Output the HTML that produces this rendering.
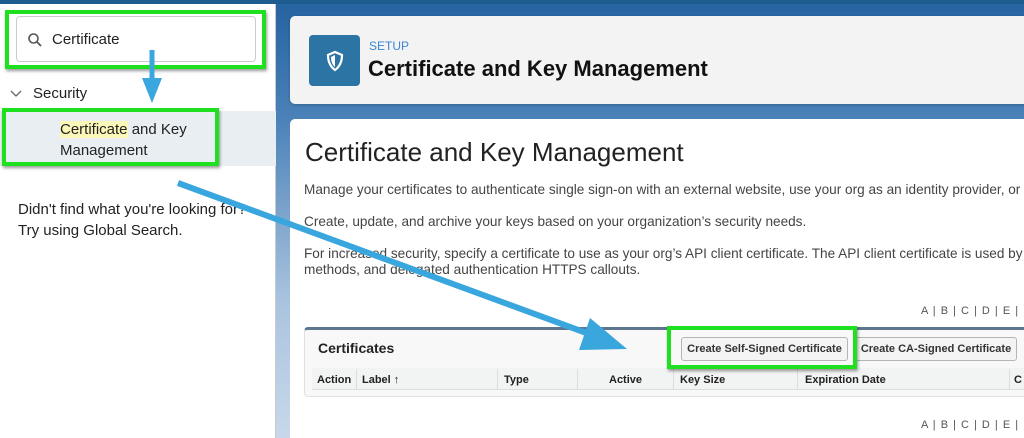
<!DOCTYPE html>
<html style="overflow:hidden;height:438px"><head><meta charset="utf-8"><style>
*{margin:0;padding:0;box-sizing:border-box}
body{width:1024px;height:438px;overflow:hidden;position:relative;font-family:"Liberation Sans",Arial,sans-serif;background:linear-gradient(#2562a0 0,#4b82b8 120px,#a9c3de 300px,#c8d8ea 438px)}
.a{position:absolute}
.left{left:0;top:4px;width:276px;height:434px;background:#fff;border-right:1px solid #c9c9c9}
.top{left:0;top:0;width:1024px;height:4px;background:#1d5c8e}
.t{position:absolute;white-space:nowrap}
.g{position:absolute;border:4px solid #1fe01f;box-shadow:1px 2px 3px rgba(0,0,0,.4)}
.th{position:absolute;top:374px;font-size:11px;font-weight:bold;color:#222}
.sep{position:absolute;top:369px;width:1px;height:20px;background:#ddd}
.p{font-size:13.6px;color:#444}
</style></head><body>
<div class="a top"></div>
<div class="a left"></div>
<div class="a" style="left:16px;top:16px;width:240px;height:46px;border:1px solid #ccc;border-radius:4px;background:#fff"></div>
<svg class="a" style="left:27px;top:32px" width="16" height="16" viewBox="0 0 16 16"><circle cx="6.5" cy="6.5" r="4.5" fill="none" stroke="#555" stroke-width="1.6"/><line x1="10" y1="10" x2="14" y2="14" stroke="#555" stroke-width="1.8"/></svg>
<div class="t" style="left:52px;top:31px;font-size:15px;color:#222">Certificate</div>
<svg class="a" style="left:10px;top:89px" width="12" height="10"><path d="M1 2 L6 7 L11 2" fill="none" stroke="#666" stroke-width="1.3"/></svg>
<div class="t" style="left:33px;top:85px;font-size:15px;color:#222">Security</div>
<div class="a" style="left:0;top:111px;width:276px;height:55px;background:#e9eef3"></div>
<div class="t" style="left:60px;top:119px;font-size:15px;line-height:21px;color:#222"><span style="background:#fbf7b9">Certificate</span> and Key<br>Management</div>
<div class="t" style="left:18px;top:199px;font-size:15px;line-height:21px;color:#222">Didn't find what you're looking for?<br>Try using Global Search.</div>

<div class="a" style="left:290px;top:16px;width:740px;height:88px;background:#f3f3f3;border-radius:5px;box-shadow:0 1px 3px rgba(0,0,0,.2)"></div>
<div class="a" style="left:309px;top:35px;width:51px;height:51px;background:#2c74a3;border-radius:4px"></div>
<svg class="a" style="left:324px;top:50px" width="22" height="22" viewBox="0 0 22 22"><path d="M11 2 L18 5 Q18 15 11 20 Q4 15 4 5 Z" fill="none" stroke="#fff" stroke-width="2.2"/><path d="M11 5 L11 17 Q7 14 7 7 Z" fill="#fff"/></svg>
<div class="t" style="left:369px;top:39px;font-size:12px;color:#3a86d4">SETUP</div>
<div class="t" style="left:368px;top:56px;font-size:22px;font-weight:bold;color:#111">Certificate and Key Management</div>

<div class="a" style="left:290px;top:119px;width:740px;height:319px;background:#fff;border-radius:5px 5px 0 0"></div>
<div class="t" style="left:305px;top:137px;font-size:26px;color:#222">Certificate and Key Management</div>
<div class="t p" style="left:304px;top:182px">Manage your certificates to authenticate single sign-on with an external website, use your org as an identity provider, or</div>
<div class="t p" style="left:304px;top:214px">Create, update, and archive your keys based on your organization’s security needs.</div>
<div class="t p" style="left:304px;top:246px;line-height:16px">For increased security, specify a certificate to use as your org’s API client certificate. The API client certificate is used by<br>methods, and delegated authentication HTTPS callouts.</div>

<div class="t" style="left:921px;top:305px;font-size:11px;color:#555;word-spacing:2px">A | B | C | D | E | F</div>
<div class="a" style="left:304px;top:327px;width:730px;height:70px;background:#f8f8f8;border:1px solid #e0e0e0;border-top:3px solid #5d7690;border-radius:4px"></div>
<div class="t" style="left:921px;top:419px;font-size:11px;color:#555;word-spacing:2px">A | B | C | D | E | F</div>
<div class="t" style="left:318px;top:340px;font-size:14px;font-weight:bold;color:#222">Certificates</div>
<div class="a" style="left:681px;top:337px;width:167px;height:24px;background:#f4f4f4;border:1px solid #b5b5b5;border-radius:3px;font-size:11px;font-weight:bold;color:#333;text-align:center;line-height:22px">Create Self-Signed Certificate</div>
<div class="a" style="left:855px;top:337px;width:162px;height:24px;background:#f4f4f4;border:1px solid #b5b5b5;border-radius:3px;font-size:11px;font-weight:bold;color:#333;text-align:center;line-height:22px">Create CA-Signed Certificate</div>
<div class="a" style="left:312px;top:368px;width:712px;height:22px;background:#f2f3f3;border-bottom:1px solid #ddd"></div>
<div class="th" style="left:317px">Action</div>
<div class="th" style="left:362px">Label ↑</div>
<div class="th" style="left:504px">Type</div>
<div class="th" style="left:609px">Active</div>
<div class="th" style="left:680px">Key Size</div>
<div class="th" style="left:805px">Expiration Date</div>
<div class="th" style="left:1014px">C</div>
<div class="sep" style="left:356px"></div><div class="sep" style="left:497px"></div><div class="sep" style="left:577px"></div><div class="sep" style="left:673px"></div><div class="sep" style="left:797px"></div><div class="sep" style="left:1009px"></div>

<div class="g" style="left:5px;top:10px;width:261px;height:59px"></div>
<div class="g" style="left:2px;top:108px;width:217px;height:58px"></div>
<div class="g" style="left:667px;top:326px;width:190px;height:43px"></div>

<svg class="a" style="left:0;top:0" width="1024" height="438">
<line x1="152" y1="50" x2="152" y2="82" stroke="#3aa6de" stroke-width="5"/>
<polygon points="142,78 162,78 152,103" fill="#3aa6de"/>
<line x1="178" y1="183" x2="600" y2="338" stroke="#3aa6de" stroke-width="6"/>
<polygon points="590,318 627,349 579,350" fill="#3aa6de"/>
</svg>
</body></html>
